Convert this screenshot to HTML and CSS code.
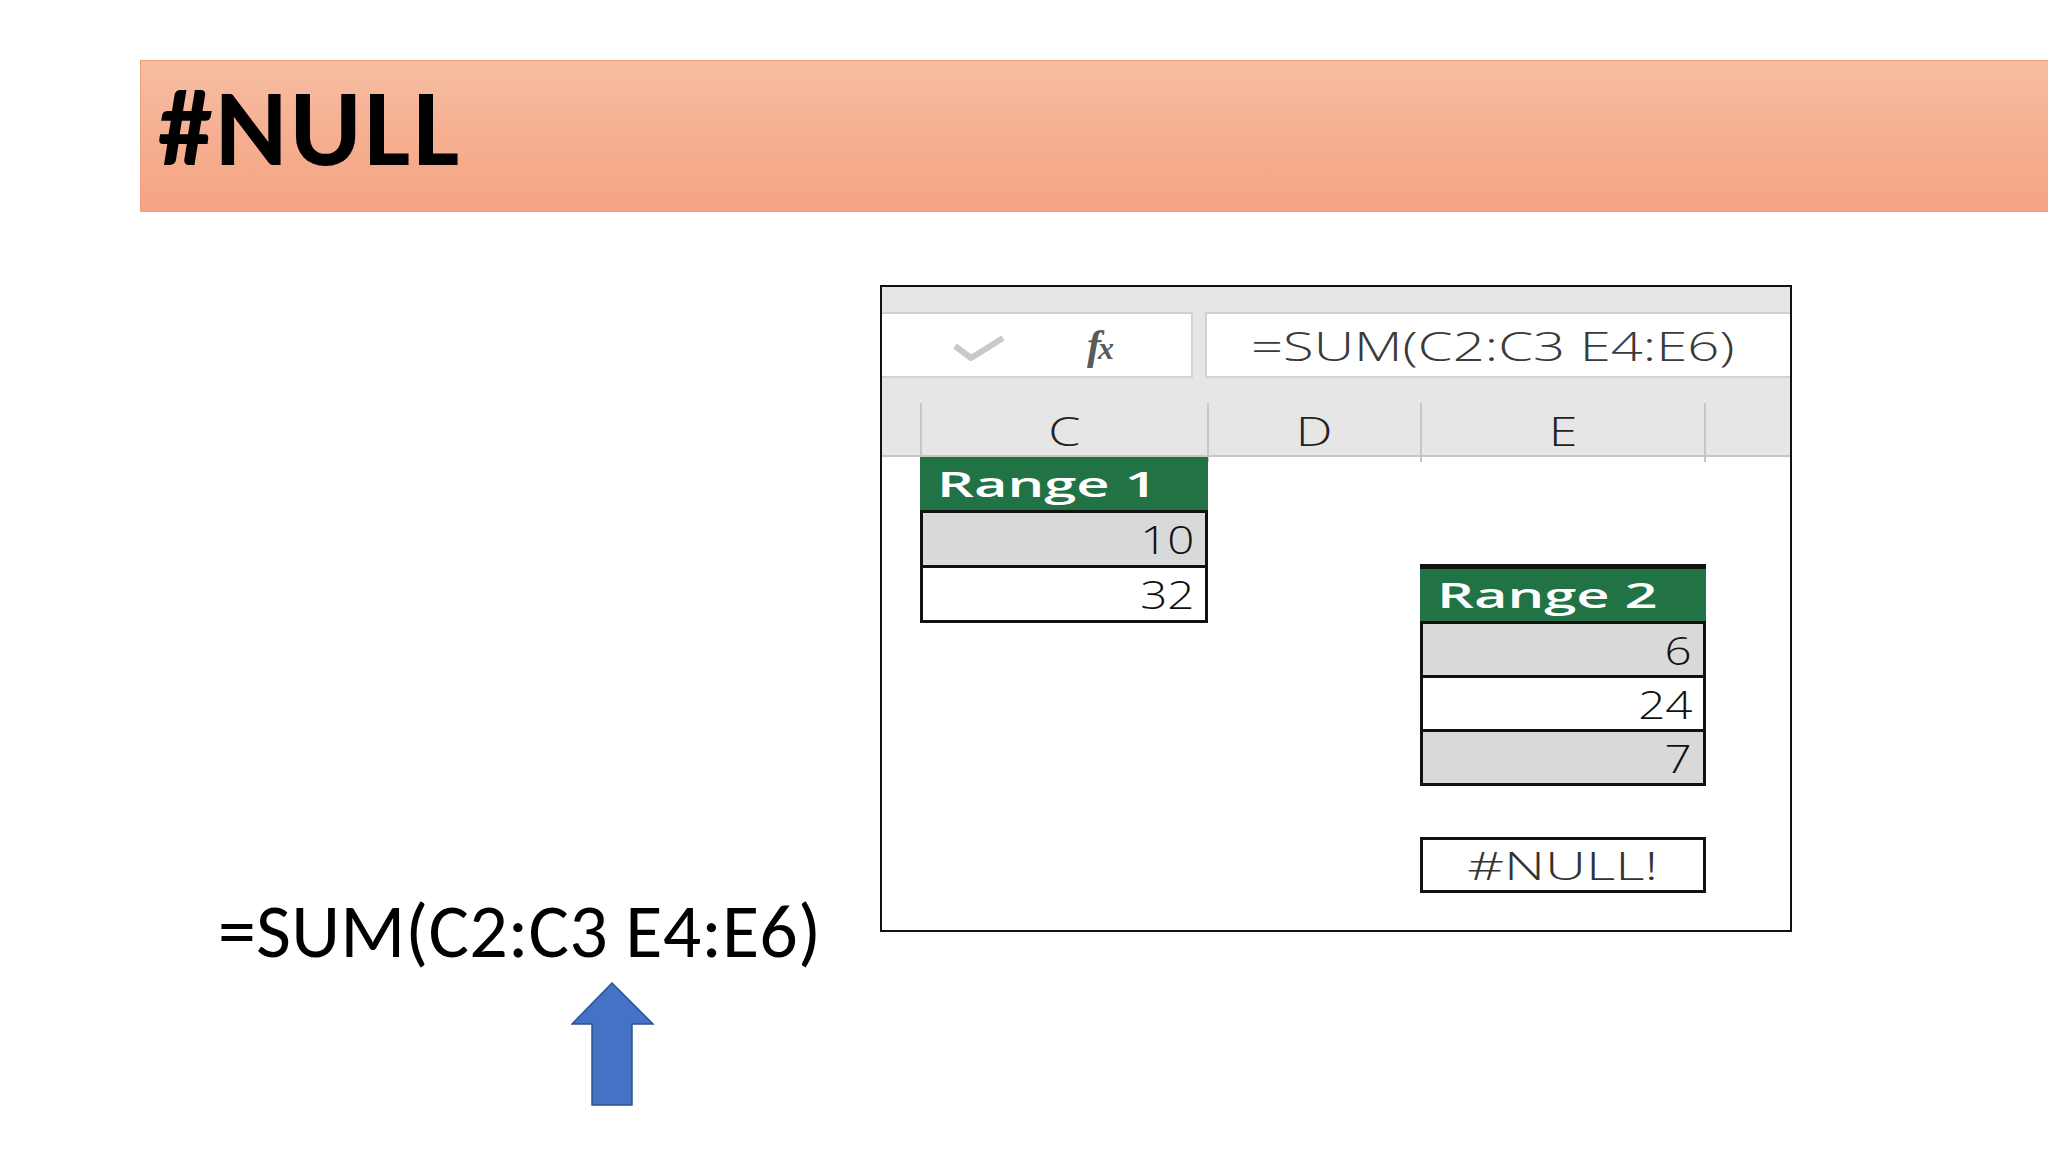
FILE: index.html
```html
<!DOCTYPE html>
<html>
<head>
<meta charset="utf-8">
<link rel="stylesheet" href="styles.css">
</head>
<body>
<div class="slide">
  <div class="banner"><h1 class="title">#NULL</h1></div>
  <div class="main">
    <div class="left">
      <div class="formula">=SUM(C2:C3 E4:E6)</div>
      <svg class="arrow" width="84" height="126" viewBox="0 0 84 126">
        <path d="M41 1 L82 42 L61 42 L61 123 L21 123 L21 42 L1 42 Z" fill="#4472C4" stroke="#2F528F" stroke-width="1.5"/>
      </svg>
    </div>
    <div class="sheet">
      <div class="strip"></div>
      <div class="fbar">
        <div class="fbox">
          <svg class="check" width="54" height="28" viewBox="0 0 54 28">
            <path d="M2 12 L18 24 L50 4" fill="none" stroke="#C9C9C9" stroke-width="6" stroke-linejoin="round"/>
          </svg>
          <span class="fx"><i>f</i><span class="x">x</span></span>
        </div>
        <div class="finput"><span class="stretch-f">=SUM(C2:C3 E4:E6)</span></div>
      </div>
      <div class="colhead">
        <div class="ch ch-row"></div>
        <div class="ch"><span class="stretch-c">C</span></div>
        <div class="ch"><span class="stretch-c">D</span></div>
        <div class="ch"><span class="stretch-c">E</span></div>
        <div class="ch ch-rest"></div>
      </div>
      <div class="grid">
        <div class="col-c">
          <div class="range range1">
            <div class="rhead"><span class="stretch-h">Range 1</span></div>
            <div class="cell grey"><span class="stretch-r">10</span></div>
            <div class="cell white"><span class="stretch-r">32</span></div>
          </div>
        </div>
        <div class="col-d"></div>
        <div class="col-e">
          <div class="range range2">
            <div class="rhead"><span class="stretch-h">Range 2</span></div>
            <div class="cell grey"><span class="stretch-r">6</span></div>
            <div class="cell white"><span class="stretch-r">24</span></div>
            <div class="cell grey"><span class="stretch-r">7</span></div>
          </div>
          <div class="nullbox"><span class="stretch-n">#NULL!</span></div>
        </div>
      </div>
    </div>
  </div>
</div>
</body>
</html>
```
FILE: styles.css
```css
* { box-sizing: border-box; }
html, body { margin: 0; padding: 0; background: #fff; }
.slide {
  width: 2048px;
  height: 1152px;
  overflow: hidden;
  background: #fff;
  font-family: Carlito, Lato, "Open Sans", sans-serif;
}
.banner {
  margin-left: 140px;
  margin-top: 60px;
  height: 152px;
  background: linear-gradient(to bottom, #F7BEA3 0%, #F5AE8F 55%, #F4A582 100%);
  border: 1px solid #EE9F7C;
  border-right: none;
  padding-left: 17px;
  padding-top: 12px;
}
.title {
  margin: 0;
  font-family: Carlito, Lato, sans-serif;
  font-weight: 700;
  font-size: 109px;
  line-height: 109px;
  color: #000;
  letter-spacing: 3px;
}
.main {
  display: flex;
  margin-top: 73px;
}
.left {
  width: 880px;
  flex: none;
  display: flex;
  flex-direction: column;
  padding-top: 608px;
}
.formula {
  margin-left: 218px;
  font-family: Carlito, Lato, sans-serif;
  font-size: 76px;
  line-height: 76px;
  color: #000;
  letter-spacing: 0.2px;
  white-space: nowrap;
}
.arrow {
  display: block;
  margin-top: 13px;
  margin-left: 571px;
}
.sheet {
  width: 912px;
  height: 647px;
  border: 2px solid #111;
  background: #fff;
  display: flex;
  flex-direction: column;
  font-family: "Open Sans", "Noto Sans", sans-serif;
  overflow: hidden;
}
.strip {
  height: 24px;
  background: #E6E6E6;
}
.fbar {
  height: 68px;
  background: #E6E6E6;
  display: flex;
  align-items: stretch;
  padding: 1px 0 1px 0;
}
.fbox {
  width: 311px;
  background: #fff;
  border: 2px solid #D2D2D2;
  border-left: none;
  display: flex;
  align-items: center;
  padding-left: 71px;
}
.check { display: block; margin-top: 6px; }
.fx {
  margin-left: 80px;
  font-family: "Liberation Serif", serif;
  font-weight: 700;
  font-size: 42px;
  color: #5A5A5A;
  letter-spacing: -3px;
  line-height: 1;
}
.fx .x { font-style: italic; font-size: 32px; }
.finput {
  flex: 1;
  margin-left: 12px;
  background: #fff;
  border: 2px solid #D2D2D2;
  border-right: none;
  display: flex;
  align-items: center;
  padding-left: 44px;
  font-size: 41px;
  font-weight: 300;
  color: #3A3A3A;
}
.stretch-f {
  display: inline-block;
  transform: scaleX(1.37);
  transform-origin: left center;
  white-space: nowrap;
}
.stretch-h {
  display: inline-block;
  transform: scaleX(1.7);
  transform-origin: left center;
  white-space: nowrap;
}
.stretch-c {
  display: inline-block;
  transform: scaleX(1.3);
  transform-origin: center center;
  white-space: nowrap;
}
.stretch-n {
  display: inline-block;
  transform: scaleX(1.5);
  transform-origin: center center;
  white-space: nowrap;
}
.stretch-r {
  display: inline-block;
  transform: scaleX(1.25);
  transform-origin: right center;
  white-space: nowrap;
}
.colhead {
  height: 78px;
  background: #E6E6E6;
  display: grid;
  grid-template-columns: 38px 287px 213px 284px 1fr;
  border-bottom: 2px solid #C6C6C6;
  padding-top: 24px;
}
.ch {
  border-left: 2px solid #C6C6C6;
  display: flex;
  justify-content: center;
  align-items: center;
  font-size: 40px;
  font-weight: 300;
  color: #222;
  padding-bottom: 4px;
}
.ch-row { border-left: none; }
.grid {
  flex: 1;
  display: grid;
  grid-template-columns: 38px 287px 213px 285px 1fr;
}
.col-c { grid-column: 2; }
.col-e { grid-column: 4; display: flex; flex-direction: column; }
.range { display: flex; flex-direction: column; }
.range1 { width: 288px; }
.range2 { width: 286px; margin-top: 107px; border-top: 5px solid #111; }
.rhead {
  background: #217346;
  color: #fff;
  font-weight: 600;
  font-size: 34px;
  display: flex;
  align-items: center;
  padding-left: 17px;
}
.range1 .rhead { height: 53px; }
.range2 .rhead { height: 52px; }
.cell {
  border: 3px solid #111;
  display: flex;
  align-items: center;
  justify-content: flex-end;
  padding-right: 11px;
  font-size: 38px;
  font-weight: 300;
  color: #111;
  height: 58px;
}
.cell + .cell { margin-top: -3px; }
.range2 .cell { height: 57px; }
.grey { background: #D9D9D9; }
.white { background: #fff; }
.nullbox {
  width: 286px;
  height: 56px;
  margin-top: 51px;
  border: 3px solid #111;
  display: flex;
  justify-content: center;
  align-items: center;
  font-size: 38px;
  color: #333;
  font-weight: 300;
}
```
